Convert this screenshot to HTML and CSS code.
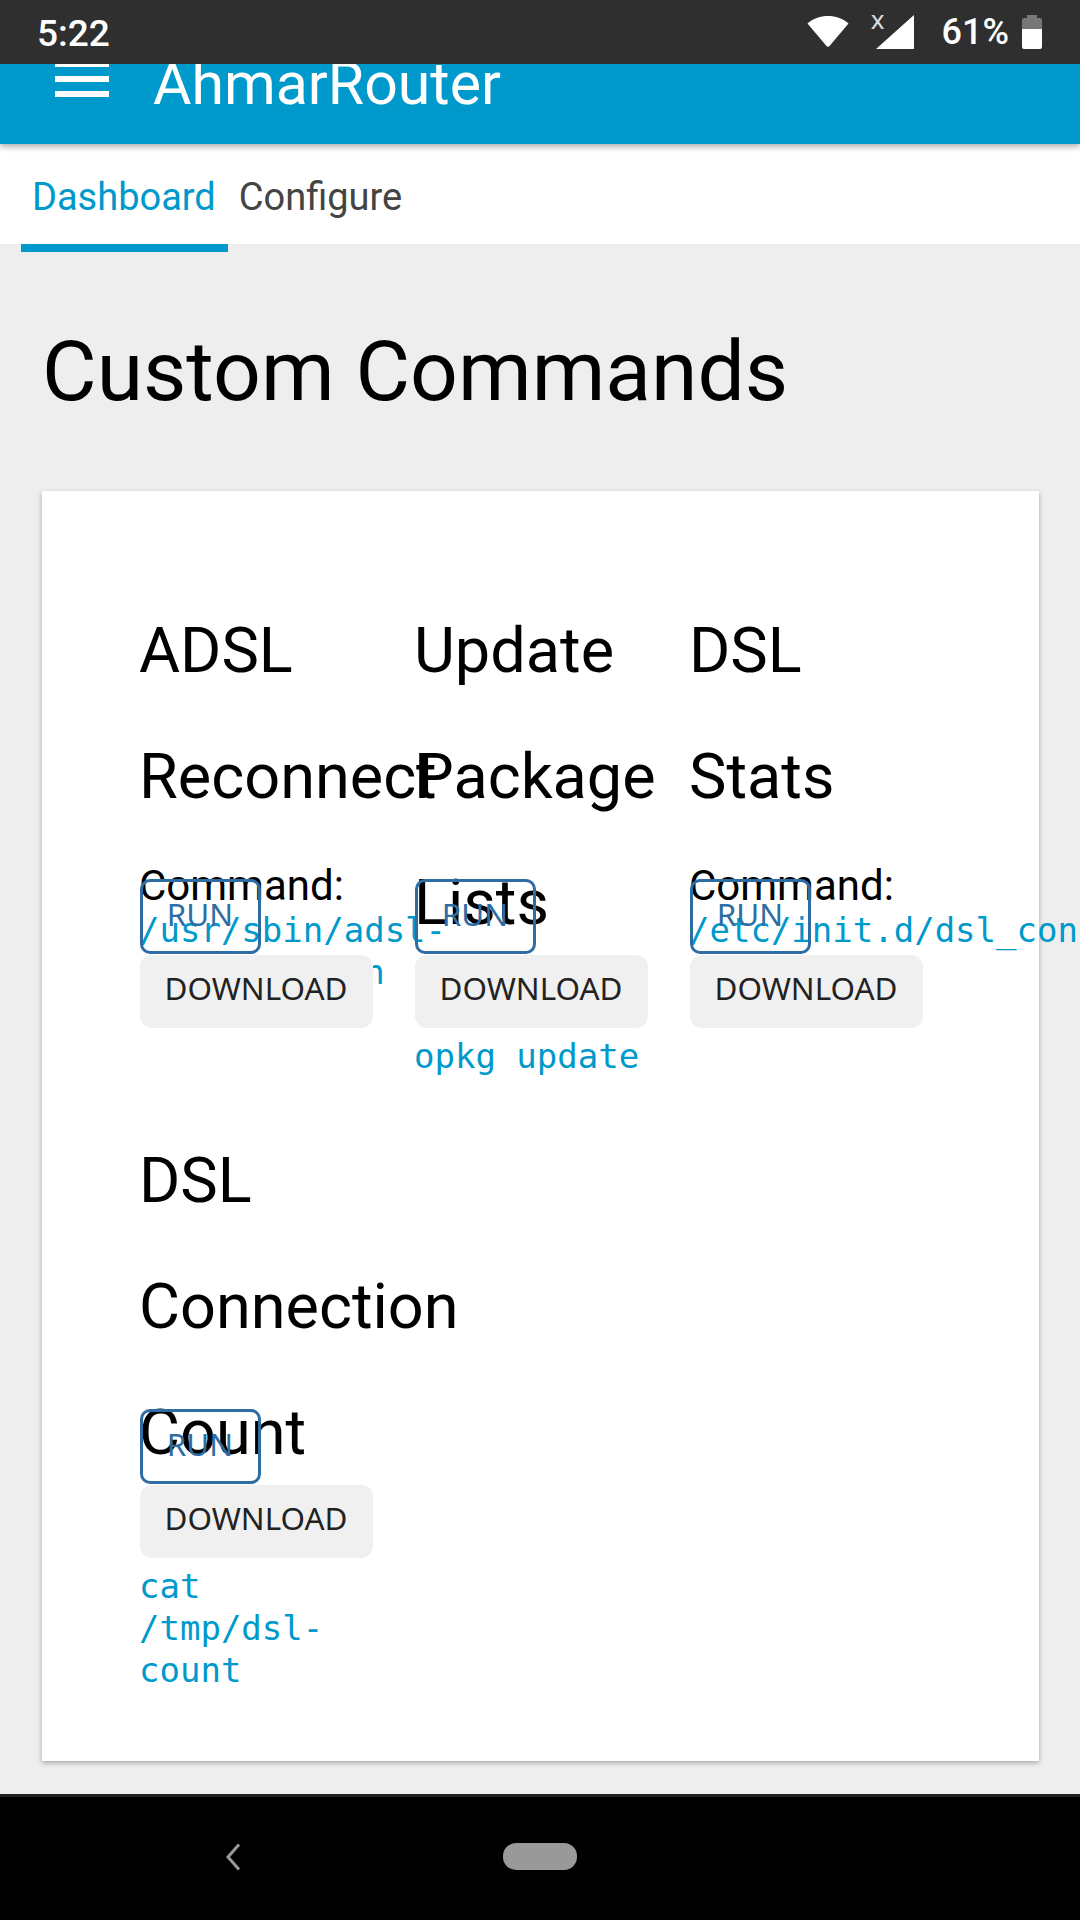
FILE: index.html
```html
<!DOCTYPE html>
<html lang="en">

<head>
    <meta charset="UTF-8">
    <meta name="viewport" content="width=device-width, initial-scale=1.0">
    <title>AhmarRouter</title>
    <link rel="stylesheet" href="styles.css">
</head>

<body>

    <!-- Android status bar -->
    <div class="status-bar">
        <span class="status-time">5:22</span>
        <div class="status-icons">
            <svg class="icon-wifi" width="42" height="32" viewBox="0 0 42 32">
                <path d="M0.5 8.5 C11 -1.5 31 -1.5 41.5 8.5 L22.5 31 C21.7 32 20.3 32 19.5 31 Z" fill="#fff" />
            </svg>
            <span class="signal-x">x</span>
            <svg class="icon-signal" width="40" height="36" viewBox="0 0 40 36">
                <path d="M39 1 V35 H1 Z" fill="#fff" />
            </svg>
            <span class="status-percent">61%</span>
            <div class="battery">
                <div class="battery-cap"></div>
                <div class="battery-empty"></div>
                <div class="battery-full"></div>
            </div>
        </div>
    </div>

    <div class="toolbar">
        <div class="menu-icon">
            <span></span>
            <span></span>
            <span></span>
        </div>
        <div class="toolbar-title">AhmarRouter</div>
    </div>

    <div class="tabs">
        <div class="tab active">Dashboard</div>
        <div class="tab">Configure</div>
    </div>

    <div class="content">
        <h1>Custom Commands</h1>

        <div class="card">
            <div class="command-grid">

                <div class="command">
                    <h3>ADSL Reconnect</h3>
                    <div class="command-label">Command:</div>
                    <code>/usr/sbin/adsl-<br>reconnection</code>
                    <div class="command-actions">
                        <button class="run-btn">RUN</button>
                        <button class="download-btn">DOWNLOAD</button>
                    </div>
                </div>

                <div class="command">
                    <h3>Update Package Lists</h3>
                    <div class="command-label">Command:</div>
                    <code>opkg update</code>
                    <div class="command-actions">
                        <button class="run-btn">RUN</button>
                        <button class="download-btn">DOWNLOAD</button>
                    </div>
                </div>

                <div class="command">
                    <h3>DSL Stats</h3>
                    <div class="command-label">Command:</div>
                    <code>/etc/init.d/dsl_control<br>status</code>
                    <div class="command-actions">
                        <button class="run-btn">RUN</button>
                        <button class="download-btn">DOWNLOAD</button>
                    </div>
                </div>

                <div class="command">
                    <h3>DSL Connection Count</h3>
                    <div class="command-label">Command:</div>
                    <code>cat<br>/tmp/dsl-<br>count</code>
                    <div class="command-actions">
                        <button class="run-btn">RUN</button>
                        <button class="download-btn">DOWNLOAD</button>
                    </div>
                </div>

            </div>
        </div>
    </div>

    <!-- Android nav bar -->
    <div class="nav-bar">
        <svg class="nav-back" width="16" height="28" viewBox="0 0 16 28">
            <path d="M14 1.5 L3 14 L14 26.5" fill="none" stroke="#999" stroke-width="3" />
        </svg>
        <div class="nav-home"></div>
    </div>

</body>

</html>
```

FILE: styles.css
```css
* {
    box-sizing: border-box;
}

html,
body {
    overflow: hidden;
}

body {
    font-family: 'Roboto', sans-serif;
    background: #eeeeee;
    color: #000;
    margin: 0;
    padding: 0;
    height: 1920px;
    display: flex;
    flex-direction: column;
}

/* Status bar */
.status-bar {
    height: 64px;
    flex-shrink: 0;
    background: #2f2f2f;
    color: white;
    display: flex;
    justify-content: space-between;
    align-items: center;
    padding: 2px 38px 0 37px;
    position: relative;
    z-index: 3;
}

.status-time {
    font-size: 37px;
    font-weight: 500;
}

.status-icons {
    display: flex;
    align-items: flex-start;
    height: 64px;
    padding-top: 14px;
}

.signal-x {
    font-family: 'Noto Sans', sans-serif;
    font-size: 26px;
    line-height: 20px;
    margin: -6px -10px 0 22px;
    color: #ddd;
}

.icon-signal {
    margin-top: -1px;
}

.status-percent {
    font-size: 36px;
    font-weight: 500;
    line-height: 36px;
    margin: -1px 0 0 27px;
}

.battery {
    width: 20px;
    height: 34px;
    margin: 0 0 0 13px;
    display: flex;
    flex-direction: column;
    align-items: center;
}

.battery-cap {
    width: 10px;
    height: 3px;
    background: #777;
}

.battery-empty {
    width: 20px;
    height: 11px;
    background: #777;
    border-radius: 2px 2px 0 0;
}

.battery-full {
    width: 20px;
    height: 20px;
    background: white;
    border-radius: 0 0 2px 2px;
}

/* Toolbar */
.toolbar {
    height: 80px;
    flex-shrink: 0;
    background: #0099cc;
    color: white;
    display: flex;
    overflow: hidden;
    padding-left: 55px;
    box-shadow: 0 3px 6px rgba(0, 0, 0, 0.3);
    position: relative;
    z-index: 2;
}

.menu-icon {
    width: 54px;
    margin-top: -3px;
    display: flex;
    flex-direction: column;
    gap: 9px;
}

.menu-icon span {
    display: block;
    height: 6px;
    background: white;
}

.toolbar-title {
    font-size: 59px;
    line-height: 66px;
    margin-left: 44px;
    margin-top: -13px;
}

/* Tabs */
.tabs {
    height: 100px;
    flex-shrink: 0;
    background: white;
    display: flex;
    padding-left: 21px;
    position: relative;
    z-index: 1;
}

.tab {
    height: 108px;
    padding: 30px 12px 0 11px;
    font-size: 38px;
    line-height: 46px;
    color: #444;
}

.tab.active {
    color: #0099cc;
    border-bottom: 8px solid #0099cc;
}

/* Page */
.content {
    flex: 1;
    min-height: 0;
    padding: 0 41px 0 42px;
}

h1 {
    margin: 81px 0 0;
    font-size: 84px;
    font-weight: 400;
    line-height: 94px;
}

.card {
    background: white;
    margin-top: 72px;
    height: 1270px;
    padding: 97px 0 0 97px;
    box-shadow: 0 2px 5px rgba(0, 0, 0, 0.3);
}

.command-grid {
    display: grid;
    grid-template-columns: repeat(3, 250px);
    column-gap: 25px;
    row-gap: 41px;
    align-items: start;
}

.command {
    position: relative;
}

.command h3 {
    margin: 0;
    font-size: 63px;
    font-weight: 400;
    line-height: 126px;
}

.command-label {
    height: 69px;
    padding-top: 22px;
    font-size: 42px;
    line-height: 47px;
}

.command code {
    display: block;
    font-family: 'DejaVu Sans Mono', monospace;
    font-size: 34px;
    line-height: 42px;
    color: #0099cc;
    white-space: nowrap;
}

/* Buttons sit over the text below the title */
.command-actions {
    position: absolute;
    top: 291px;
    left: 0.5px;
    display: flex;
    flex-direction: column;
    align-items: flex-start;
    gap: 1px;
}

.run-btn,
.download-btn {
    display: block;
    font-family: 'Noto Sans', sans-serif;
    font-size: 31.4px;
}

.run-btn {
    width: 121px;
    height: 75px;
    padding: 0 0 7px;
    background: transparent;
    color: #2e6da4;
    border: 3px solid #2e6da4;
    border-radius: 10px;
}

.download-btn {
    width: 233px;
    height: 73px;
    padding: 0 0 8px;
    background: #f0f0f0;
    color: #222;
    border: none;
    border-radius: 12px;
}

/* Nav bar */
.nav-bar {
    height: 126px;
    flex-shrink: 0;
    background: #000;
    border-top: 3px solid #222;
    position: relative;
    display: flex;
    align-items: center;
    padding: 0 0 4px 225px;
}

.nav-home {
    width: 74px;
    height: 27px;
    background: #999;
    border-radius: 13px;
    margin-left: 262px;
}
```
